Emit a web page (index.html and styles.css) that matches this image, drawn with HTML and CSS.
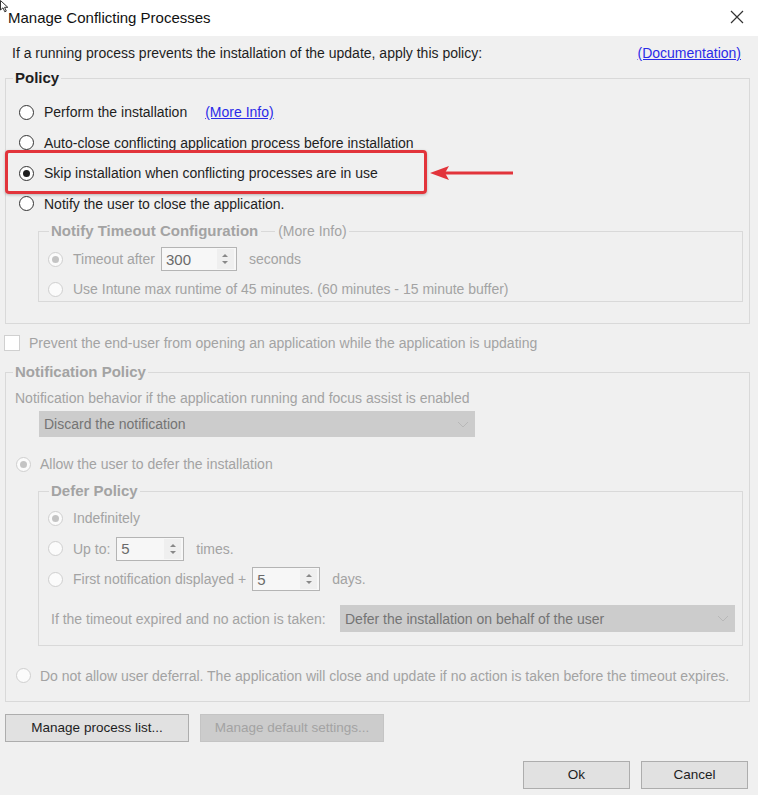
FILE: index.html
```html
<!DOCTYPE html>
<html lang="en">
<head>
    <meta charset="UTF-8">
    <title>Manage Conflicting Processes</title>
    <link rel="stylesheet" href="styles.css">
</head>
<body>
    <!-- mouse pointer left in the capture -->
    <svg class="cursor" width="10" height="14" viewBox="0 0 10 14">
        <path d="M0.5 0.5 L0.5 10 L3 7.8 L4.8 11.8 L6.3 11.1 L4.6 7.3 L7.8 7.3 Z" fill="#fff" stroke="#333" stroke-width="1"/>
    </svg>

    <!-- Window title bar -->
    <div class="titlebar">
        <span class="title">Manage Conflicting Processes</span>
        <svg class="close" width="14" height="14" viewBox="0 0 14 14">
            <path d="M1 1 L13 13 M13 1 L1 13" stroke="#333" stroke-width="1.2"/>
        </svg>
    </div>

    <div class="dialog">
        <div class="intro">
            <span>If a running process prevents the installation of the update, apply this policy:</span>
            <a class="link">(Documentation)</a>
        </div>

        <!-- Policy -->
        <fieldset class="group policy">
            <legend>Policy</legend>

            <div class="row">
                <span class="radio"></span>
                <span>Perform the installation</span>
                <a class="link more">(More Info)</a>
            </div>
            <div class="row">
                <span class="radio"></span>
                <span>Auto-close conflicting application process before installation</span>
            </div>
            <div class="row marked">
                <span class="radio checked"></span>
                <span>Skip installation when conflicting processes are in use</span>
                <div class="mark-box"></div>
                <svg class="mark-arrow" width="86" height="18" viewBox="0 0 86 18">
                    <path d="M84 9 L16 9" stroke="#e2343b" stroke-width="3"/>
                    <path d="M1 9 L20 2 L16 9 L20 16 Z" fill="#e2343b"/>
                </svg>
            </div>
            <div class="row">
                <span class="radio"></span>
                <span>Notify the user to close the application.</span>
            </div>

            <fieldset class="group sub notify disabled">
                <legend><b>Notify Timeout Configuration</b><i class="gapline"></i><span class="more-off">(More Info)</span></legend>
                <div class="row short">
                    <span class="radio off checked"></span>
                    <span>Timeout after</span>
                    <div class="spin w75"><span>300</span><div class="spin-btns"><i class="up"></i><i class="down"></i></div></div>
                    <span class="unit">seconds</span>
                </div>
                <div class="row short">
                    <span class="radio off"></span>
                    <span>Use Intune max runtime of 45 minutes. (60 minutes - 15 minute buffer)</span>
                </div>
            </fieldset>
        </fieldset>

        <div class="row check-row disabled">
            <span class="checkbox"></span>
            <span>Prevent the end-user from opening an application while the application is updating</span>
        </div>

        <!-- Notification Policy -->
        <fieldset class="group notification disabled">
            <legend>Notification Policy</legend>
            <div class="desc">Notification behavior if the application running and focus assist is enabled</div>
            <div class="select wide">
                <span>Discard the notification</span>
                <svg width="12" height="7" viewBox="0 0 12 7"><path d="M1 1 L6 6 L11 1" fill="none" stroke="#b8b8b8" stroke-width="1"/></svg>
            </div>
            <div class="row allow">
                <span class="radio off checked"></span>
                <span>Allow the user to defer the installation</span>
            </div>

            <fieldset class="group sub defer">
                <legend>Defer Policy</legend>
                <div class="row half">
                    <span class="radio off checked"></span>
                    <span>Indefinitely</span>
                </div>
                <div class="row half">
                    <span class="radio off"></span>
                    <span>Up to:</span>
                    <div class="spin w67"><span>5</span><div class="spin-btns"><i class="up"></i><i class="down"></i></div></div>
                    <span class="unit">times.</span>
                </div>
                <div class="row half">
                    <span class="radio off"></span>
                    <span>First notification displayed +</span>
                    <div class="spin w67"><span>5</span><div class="spin-btns"><i class="up"></i><i class="down"></i></div></div>
                    <span class="unit">days.</span>
                </div>
                <div class="timeout-row">
                    <span>If the timeout expired and no action is taken:</span>
                    <div class="select action">
                        <span>Defer the installation on behalf of the user</span>
                        <svg width="12" height="7" viewBox="0 0 12 7"><path d="M1 1 L6 6 L11 1" fill="none" stroke="#b8b8b8" stroke-width="1"/></svg>
                    </div>
                </div>
            </fieldset>

            <div class="row no-defer">
                <span class="radio off"></span>
                <span>Do not allow user deferral. The application will close and update if no action is taken before the timeout expires.</span>
            </div>
        </fieldset>

        <div class="actions">
            <button class="btn wide-btn">Manage process list...</button>
            <button class="btn wide-btn" disabled>Manage default settings...</button>
        </div>

        <div class="footer-buttons">
            <button class="btn small-btn">Ok</button>
            <button class="btn small-btn">Cancel</button>
        </div>
    </div>
</body>
</html>
```

FILE: styles.css
```css
body {
    margin: 0;
    padding: 0;
    width: 758px;
    height: 795px;
    background: #f0f0f0;
    font-family: "Liberation Sans", Arial, sans-serif;
    font-size: 14px;
    color: #1e1e1e;
    position: relative;
    overflow: hidden;
}

.cursor {
    position: absolute;
    left: 0;
    top: 0;
}

/* Title bar */
.titlebar {
    height: 36px;
    background: #ffffff;
    display: flex;
    align-items: center;
    justify-content: space-between;
    padding: 0 14px 2px 8px;
    box-sizing: border-box;
}

.title {
    font-size: 15px;
    color: #111;
}

.dialog {
    padding: 0 8px 0 5px;
}

.intro {
    height: 34px;
    display: flex;
    align-items: center;
    justify-content: space-between;
    padding: 0 9px 0 7px;
}

.link {
    color: #2b2be8;
    text-decoration: underline;
}

/* Group boxes */
.group {
    margin: 0;
    border: 1px solid #d9d9d9;
    padding: 0 6px 0 0;
    min-width: 0;
}

.group legend {
    font-weight: bold;
    font-size: 15px;
    line-height: 16px;
    padding: 0 2px;
}

.policy {
    padding: 11px 6px 21px 13px;
}

.policy > legend {
    margin-left: -6px;
}

.row {
    height: 30.5px;
    display: flex;
    align-items: center;
    white-space: nowrap;
}

.row .radio,
.row .checkbox {
    margin-right: 10px;
}

.more {
    margin-left: 18px;
}

/* Radio buttons */
.radio {
    width: 13px;
    height: 13px;
    border: 1px solid #333;
    border-radius: 50%;
    background: #fff;
    flex: none;
    position: relative;
}

.radio.checked::after {
    content: "";
    position: absolute;
    left: 3px;
    top: 3px;
    width: 7px;
    height: 7px;
    border-radius: 50%;
    background: #1e1e1e;
}

.radio.off {
    border-color: #cfcfcf;
    background: #fbfbfb;
}

.radio.off.checked::after {
    background: #c4c4c4;
}

.checkbox {
    width: 14px;
    height: 14px;
    border: 1px solid #d0d0d0;
    background: #fff;
    flex: none;
}

/* Highlight annotation */
.marked {
    position: relative;
}

.mark-box {
    position: absolute;
    left: -14px;
    top: -8px;
    width: 416px;
    height: 38px;
    border: 3px solid #e2343b;
    border-radius: 4px;
    box-shadow: 0 1px 3px rgba(0, 0, 0, 0.25);
}

.mark-arrow {
    position: absolute;
    left: 410px;
    top: 6px;
}

/* Disabled look */
.disabled {
    color: #a3a3a3;
}

.sub {
    margin-left: 19px;
}

.notify {
    margin-top: 4px;
    padding: 8px 6px 0 9px;
}

.notify legend {
    display: flex;
    align-items: center;
    padding: 0;
    margin-left: 1px;
}

.notify legend b {
    padding: 0 2px;
}

.gapline {
    width: 14px;
    height: 1px;
    background: #d9d9d9;
    margin: 0 1px;
}

.more-off {
    font-weight: normal;
    font-size: 14px;
    padding: 0 2px;
}

.row.short {
    height: 24px;
}

.row.short + .row.short {
    margin-top: 6px;
}

/* Spin boxes */
.spin {
    height: 24px;
    border: 1px solid #b4b4b4;
    background: #f7f7f7;
    display: flex;
    align-items: center;
    justify-content: space-between;
    box-sizing: border-box;
    margin-left: 6px;
    color: #6a6a6a;
    font-size: 15px;
}

.spin span {
    padding-left: 4px;
}

.w75 {
    width: 76px;
}

.w67 {
    width: 68px;
}

.spin-btns {
    width: 17px;
    height: 20px;
    margin-right: 2px;
    display: flex;
    flex-direction: column;
    align-items: center;
    justify-content: center;
    gap: 4px;
    background: #efefef;
}

.spin-btns i {
    width: 0;
    height: 0;
    border-left: 3px solid transparent;
    border-right: 3px solid transparent;
}

.spin-btns .up {
    border-bottom: 3px solid #888;
}

.spin-btns .down {
    border-top: 3px solid #888;
}

.unit {
    margin-left: 12px;
}

.check-row {
    height: 30px;
    margin: 4px 0 0 -1px;
}

.check-row .checkbox {
    margin-right: 9px;
}

/* Notification policy */
.notification {
    margin-top: 6px;
    padding: 8px 6px 10px 9px;
}

.notification > legend {
    margin-left: -2px;
}

.desc {
    height: 20px;
    line-height: 20px;
    white-space: nowrap;
}

.select {
    height: 26px;
    background: #cccccc;
    display: flex;
    align-items: center;
    justify-content: space-between;
    padding: 0 6px 0 5px;
    box-sizing: border-box;
    color: #747474;
    white-space: nowrap;
}

.select.wide {
    width: 436px;
    margin: 3px 0 0 24px;
}

.row.allow {
    height: 30px;
    margin: 12px 0 0 0;
}

.row.allow .radio,
.row.no-defer .radio {
    margin-left: 1px;
    margin-right: 9px;
}

.defer {
    margin: 4px 0 0 23px;
    padding: 4px 7px 12px 9px;
}

.defer > legend {
    margin-left: 1px;
}

.row.half {
    height: 30.5px;
}

.timeout-row {
    height: 28px;
    margin-top: 10px;
    display: flex;
    align-items: center;
    justify-content: space-between;
    padding-left: 3px;
    white-space: nowrap;
}

.select.action {
    width: 395px;
    height: 27px;
}

.row.no-defer {
    height: 30px;
    margin-top: 15px;
}

/* Buttons */
.actions {
    display: flex;
    gap: 11px;
    margin-top: 12px;
}

.btn {
    height: 28px;
    font-family: "Liberation Sans", Arial, sans-serif;
    font-size: 13.5px;
    color: #1e1e1e;
    background: #e1e1e1;
    border: 1px solid #adadad;
    padding: 0;
}

.btn:disabled {
    background: #cccccc;
    border-color: #c4c4c4;
    color: #a3a3a3;
}

.wide-btn {
    width: 184px;
}

.footer-buttons {
    display: flex;
    justify-content: flex-end;
    gap: 11px;
    margin-top: 19px;
    padding-right: 2px;
}

.small-btn {
    width: 107px;
}
```
